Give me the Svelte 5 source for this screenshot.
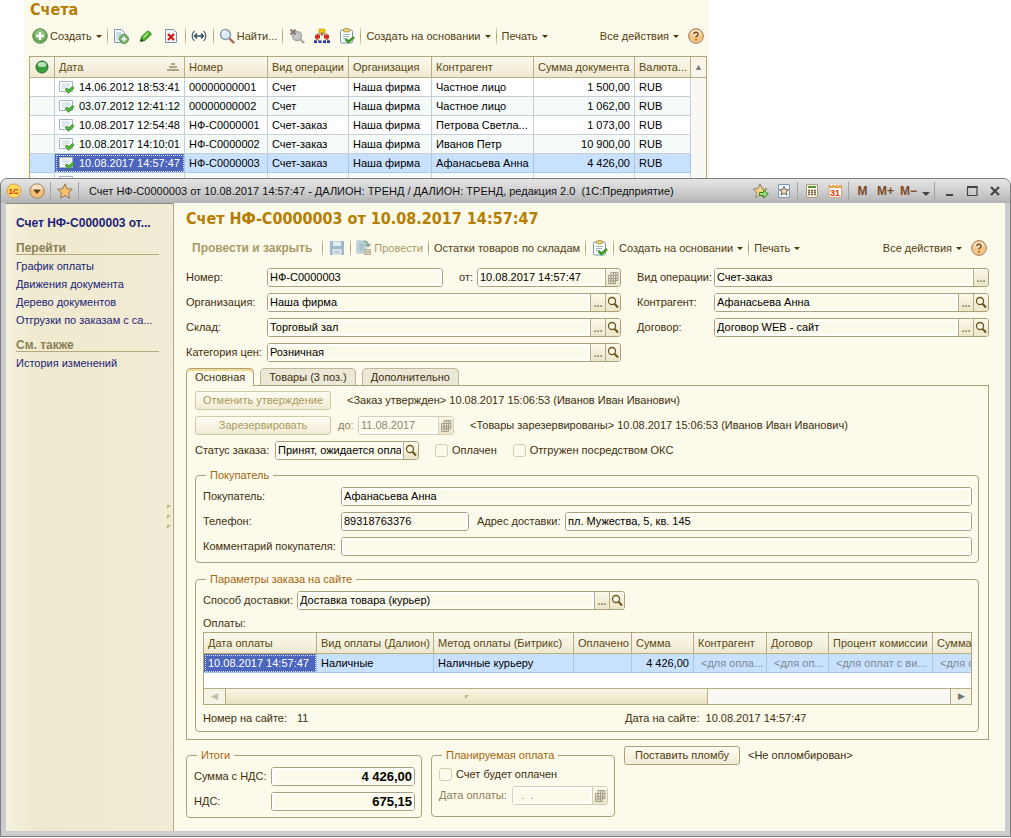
<script lang="ts">
  type Tool = 'find' | 'pick' | 'date';

  const invoices = [
    { date: '14.06.2012 18:53:41', number: '00000000001', kind: 'Счет', org: 'Наша фирма', partner: 'Частное лицо', sum: '1 500,00' },
    { date: '03.07.2012 12:41:12', number: '00000000002', kind: 'Счет', org: 'Наша фирма', partner: 'Частное лицо', sum: '1 062,00' },
    { date: '10.08.2017 12:54:48', number: 'НФ-С0000001', kind: 'Счет-заказ', org: 'Наша фирма', partner: 'Петрова Светла...', sum: '1 073,00' },
    { date: '10.08.2017 14:10:01', number: 'НФ-С0000002', kind: 'Счет-заказ', org: 'Наша фирма', partner: 'Иванов Петр', sum: '10 900,00' },
    { date: '10.08.2017 14:57:47', number: 'НФ-С0000003', kind: 'Счет-заказ', org: 'Наша фирма', partner: 'Афанасьева Анна', sum: '4 426,00' },
  ];

  const links = ['График оплаты', 'Движения документа', 'Дерево документов', 'Отгрузки по заказам с са...'];
  const tabs = ['Основная', 'Товары (3 поз.)', 'Дополнительно'];

  let selected = $state(4);
  let activeTab = $state(0);
</script>

{#snippet icon(name: string)}
  <svg class="icon" width="16" height="16" viewBox="0 0 16 16" fill="none" aria-hidden="true">
    {#if name === 'add'}
      <circle cx="8" cy="8" r="7.3" fill="#6cab5c" stroke="#5f8f55" />
      <circle cx="8" cy="6.5" r="5" fill="#a5d091" opacity=".6" />
      <path d="M8 4v8M4 8h8" stroke="#fff" stroke-width="2.4" />
    {:else if name === 'copy'}
      <path d="M1.5 1.5h7l3 3v10h-10z" fill="#f4f8fb" stroke="#7d97ad" />
      <path d="M3.5 5h5M3.5 7h6M3.5 9h4M3.5 11h3" stroke="#9fb6c8" />
      <circle cx="11" cy="11" r="4.5" fill="#7bb568" stroke="#5b9150" />
      <path d="M11 8.5v5M8.5 11h5" stroke="#fff" stroke-width="1.6" />
    {:else if name === 'edit'}
      <path d="M2.500 13.500l1-4.500 5.500-5.500c1.500-1 4.500 1.500 4 3L7 12.500z" fill="#4fb52c" stroke="#2f7a1c" />
      <path d="M2.500 13.500l.8-3 2.200 2z" fill="#333" />
      <path d="M5.500 9.500l4.500-4.500" stroke="#b4ec8e" stroke-width="1.400" />
    {:else if name === 'delete'}
      <path d="M2.5 1.500h8l3 3v10h-11z" fill="#f1f6fa" stroke="#7590a8" />
      <path d="M5 6l6 6M11 6l-6 6" stroke="#cf1a12" stroke-width="2.200" />
    {:else if name === 'period'}
      <path d="M3.500 3C.5 5 .5 11 3.500 13M12.500 3c3 2 3 8 0 10" stroke="#526a7c" stroke-width="1.300" />
      <path d="M3.500 8h9M6 5.500L3.500 8 6 10.500M10 5.500L12.500 8 10 10.500" stroke="#32495b" stroke-width="1.300" />
    {:else if name === 'search'}
      <path d="M10.500 10.500l4 4" stroke="#b0694e" stroke-width="2.400" stroke-linecap="round" />
      <circle cx="6.500" cy="6.500" r="5" fill="#dcebf7" stroke="#8598ac" stroke-width="1.400" />
      <path d="M3.500 6a3 3 0 0 1 3-3" stroke="#fff" stroke-width="1.400" />
    {:else if name === 'search-off'}
      <path d="M11 11l3.500 3.500" stroke="#b5a8a0" stroke-width="2.400" stroke-linecap="round" />
      <circle cx="8" cy="8" r="4.500" fill="#c6c6c6" stroke="#a5a5a5" stroke-width="1.300" />
      <path d="M1.500 1.500l5 5M6.500 1.500l-5 5" stroke="#8d7474" stroke-width="2" />
    {:else if name === 'tree'}
      <path d="M8 4v4M3 7.500V6h10v1.500M1.500 13l1.500-3 2 3M11 13l2-3 1.500 3" stroke="#9b4a20" />
      <path d="M5 1h6v3.500H5z" fill="#f1c800" stroke="#b89500" stroke-width=".6" />
      <path d="M1 7h5v3.500H1zM10 7h5v3.500h-5z" fill="#de2a18" />
      <path d="M0 12.500h3v2.500H0zM4.500 12.500h3v2.500h-3zM9 12.500h3v2.500H9zM13 12.500h3v2.500h-3z" fill="#2336a8" />
    {:else if name === 'clipboard'}
      <rect x="1.500" y="2" width="12" height="13" rx="1.500" fill="#fff" stroke="#7995a6" />
      <rect x="4.500" y=".8" width="6" height="3" rx="1" fill="#f1da86" stroke="#a98b31" />
      <path d="M4 6.500h7M4 8.500h6M4 10.500h3" stroke="#9ab1c4" />
      <path d="M6.500 11l3 3 5.500-5" stroke="#3c9a29" stroke-width="2.600" />
    {:else if name === 'help'}
      <circle cx="8" cy="8" r="7.400" fill="#f6c583" stroke="#9b8366" />
      <ellipse cx="8" cy="5" rx="5" ry="3.300" fill="#fff" opacity=".5" />
      <path d="M5.800 6.300c0-3 4.600-2.600 4.300 0C10 7.700 8 7.600 8 9.500M8 11v1.500" stroke="#7b4a1e" stroke-width="1.400" />
    {:else if name === 'posted'}
      <path d="M.5 2.500h13v10H.5z" fill="#fbfdff" stroke="#a4b6c6" />
      <path d="M3 5h8M3 7h8M3 9h4" stroke="#c2d0dc" />
      <path d="M7 9.500l2.500 3 5-4.500" stroke="#2f7d22" stroke-width="3" />
      <path d="M7 9.500l2.500 3 5-4.500" stroke="#58c23d" stroke-width="1.600" />
    {:else if name === 'save'}
      <path d="M1 1h14v14H1z" fill="#9fb9cc" />
      <path d="M4 1.500h8v4.500H4zM3.500 9h9v6h-9z" fill="#e3ecef" />
      <path d="M5 11h6M5 13h6" stroke="#a6bccb" />
    {:else if name === 'post'}
      <path d="M1 1h9v12H1z" fill="#c8d8e0" stroke="#a9bdc9" />
      <path d="M3 4h5M3 6h5M3 8h5M3 10h4" stroke="#93aec0" />
      <path d="M8 2c3-1 4 0 4 3M9.500 4l2.500 2.500L14.500 4" stroke="#7faa85" stroke-width="1.500" />
      <path d="M8.500 9.500h6v5h-6z" fill="#d9d7bd" stroke="#b4b193" />
      <path d="M8.500 12h6" stroke="#b4b193" />
    {:else if name === 'star'}
      <path d="M8 .8l2.200 4.900 5.200.6-3.900 3.500 1.100 5.300L8 12.500l-4.600 2.600 1.100-5.300L.6 6.300l5.200-.6z" fill="#f9c069" stroke="#8a795f" />
    {:else if name === 'star-go'}
      <path d="M7 .8l2 4.700 5 .6-3.700 3.300 1 5L7 12l-4.300 2.400 1-5L.3 6.100l4.700-.6z" fill="#f8cf86" stroke="#8f8267" />
      <path d="M6.500 9.500h4V7l4.800 4-4.800 4v-2.500h-4z" fill="#9bdc74" stroke="#39852a" />
    {:else if name === 'doc-star'}
      <path d="M2.500 1.500h11v13h-11z" fill="#eff4f8" stroke="#8098ad" />
      <path d="M8 3.500l1.300 3 3.200.3-2.400 2.100.8 3.200L8 10.400l-2.900 1.700.8-3.200-2.400-2.100 3.200-.3z" fill="#f5d9a0" stroke="#59626c" />
    {:else if name === 'calc'}
      <path d="M2.500 1.500h11v13h-11z" fill="#fdf7e6" stroke="#a79a7d" />
      <path d="M4 3h8v2H4z" fill="#529a3c" />
      <path d="M4 7.500h8M4 9.500h8M4 11.500h8" stroke="#7a5f45" stroke-width="1.300" stroke-dasharray="2 1" />
    {:else if name === 'calendar'}
      <path d="M2 2.500h12.500v12H2z" fill="#fff8ec" stroke="#c5a780" />
      <path d="M2 2h12.500v3H2z" fill="#e9a657" />
      <path d="M4.500 1v2M8 1v2M11.500 1v2" stroke="#fff" />
      <text x="3" y="13" font-size="9" font-weight="bold" fill="#e03a20">31</text>
    {:else if name === 'logo'}
      <circle cx="8" cy="8" r="7" fill="#ffdf52" stroke="#dc9a62" />
      <text x="2.500" y="11" font-size="8" font-weight="bold" fill="#e01c10">1С</text>
    {:else if name === 'menu'}
      <circle cx="8" cy="8" r="7.200" fill="#f5bd72" stroke="#96856d" />
      <ellipse cx="8" cy="5" rx="5.500" ry="3.500" fill="#fff" opacity=".55" />
      <path d="M4 6.500h8L8 11z" fill="#5d4426" />
    {:else if name === 'ball'}
      <circle cx="8" cy="8" r="6" fill="#37a03d" stroke="#2e6b31" />
      <ellipse cx="8" cy="5.500" rx="4.200" ry="2.500" fill="#b7e6b2" />
    {:else if name === 'find'}
      <circle cx="7" cy="6" r="3.500" fill="#fffdf0" stroke="#6b5416" stroke-width="1.300" />
      <path d="M9.500 8.800l3.500 3.700" stroke="#6b5416" stroke-width="2" />
    {:else if name === 'date'}
      <path d="M6 2.500h7v8H6z" fill="#e9e7d6" stroke="#a6a18c" />
      <path d="M3.500 5.500h7v8h-7zM3.500 8.500h9.500M3.500 11h7M6 5.500v8M8.500 3v10M6 5.500h7M10.800 2.500v8" stroke="#a6a18c" />
    {/if}
  </svg>
{/snippet}

{#snippet caret()}<span class="caret"></span>{/snippet}
{#snippet help()}<button class="help" aria-label="Справка">{@render icon('help')}</button>{/snippet}

{#snippet field(id: string, value: string, tools: Tool[] = [], disabled = false)}
  <div class="field" class:disabled>
    <input {id} {value} {disabled} type="text" />
    {#each tools as tool}
      {#if tool === 'pick'}
        <button class="tool pick" aria-label="Выбрать">...</button>
      {:else}
        <button class="tool" {disabled} aria-label={tool === 'find' ? 'Открыть' : 'Календарь'}>{@render icon(tool)}</button>
      {/if}
    {/each}
  </div>
{/snippet}

<div class="desktop">
  <section class="list">
    <h1>Счета</h1>
    <div class="toolbar">
      <button>{@render icon('add')}Создать{@render caret()}</button>
      <i></i>
      <button class="square" aria-label="Скопировать">{@render icon('copy')}</button>
      <button class="square" aria-label="Изменить">{@render icon('edit')}</button>
      <button class="square" aria-label="Удалить">{@render icon('delete')}</button>
      <i></i>
      <button class="square" aria-label="Период">{@render icon('period')}</button>
      <i></i>
      <button>{@render icon('search')}Найти...</button>
      <i></i>
      <button class="square" aria-label="Отменить поиск">{@render icon('search-off')}</button>
      <button class="square" aria-label="Структура">{@render icon('tree')}</button>
      <button class="square" aria-label="Отчет">{@render icon('clipboard')}</button>
      <i></i>
      <button>Создать на основании{@render caret()}</button>
      <i></i>
      <button>Печать{@render caret()}</button>
      <button class="right">Все действия{@render caret()}</button>
      {@render help()}
    </div>
    <div class="grid-box list-grid">
      <table>
        <colgroup>
          <col style:width="25px" /><col style:width="130px" /><col style:width="83px" /><col style:width="81px" />
          <col style:width="83px" /><col /><col style:width="101px" /><col style:width="56px" />
        </colgroup>
        <thead>
          <tr>
            <th class="mark">{@render icon('ball')}</th>
            <th>
              <div class="sorted">
                Дата
                <svg width="12" height="8" viewBox="0 0 12 8" aria-hidden="true"><path d="M4 1h4M2 4h8M0 7h12" stroke="#aca486" stroke-width="2" /></svg>
              </div>
            </th>
            <th>Номер</th><th>Вид операции</th><th>Организация</th><th>Контрагент</th><th>Сумма документа</th><th>Валюта...</th>
          </tr>
        </thead>
        <tbody>
          {#each invoices as row, i}
            <tr class:selected={selected === i} onclick={() => (selected = i)}>
              <td></td>
              <td class="date"><div class="stamp">{@render icon('posted')}{row.date}</div></td>
              <td>{row.number}</td><td>{row.kind}</td><td>{row.org}</td><td>{row.partner}</td>
              <td class="num">{row.sum}</td><td>RUB</td>
            </tr>
          {/each}
          <tr><td></td><td class="date"><div class="stamp">{@render icon('posted')}</div></td><td></td><td></td><td></td><td></td><td></td><td></td></tr>
        </tbody>
      </table>
      <div class="vscroll"><button aria-label="Вверх">▲</button></div>
    </div>
  </section>

  <main class="window">
    <header class="titlebar">
      <button aria-label="1С">{@render icon('logo')}</button>
      <button aria-label="Меню">{@render icon('menu')}</button>
      <i></i>
      <button aria-label="Избранное">{@render icon('star')}</button>
      <i></i>
      <span class="caption">Счет НФ-С0000003 от 10.08.2017 14:57:47 - ДАЛИОН: ТРЕНД / ДАЛИОН: ТРЕНД, редакция 2.0&nbsp; (1С:Предприятие)</span>
      <button aria-label="Добавить в избранное">{@render icon('star-go')}</button>
      <button aria-label="Список избранного">{@render icon('doc-star')}</button>
      <i></i>
      <button aria-label="Калькулятор">{@render icon('calc')}</button>
      <button aria-label="Календарь">{@render icon('calendar')}</button>
      <i></i>
      <button class="memory">M</button>
      <button class="memory">M+</button>
      <button class="memory">M−</button>
      <button class="more" aria-label="Еще"><span class="caret"></span></button>
      <i></i>
      <button aria-label="Свернуть"><svg width="14" height="14" viewBox="0 0 14 14"><path d="M4 11h7" stroke="#444" stroke-width="2" /></svg></button>
      <button aria-label="Развернуть"><svg width="14" height="14" viewBox="0 0 14 14"><path d="M2.500 3h9.500v8.500h-9.500z" fill="none" stroke="#444" stroke-width="1.200" /><path d="M2 3h10.500" stroke="#444" stroke-width="2" /></svg></button>
      <button aria-label="Закрыть"><svg width="14" height="14" viewBox="0 0 14 14"><path d="M3 3l8 8M11 3l-8 8" stroke="#444" stroke-width="2.200" /></svg></button>
    </header>

    <div class="body">
      <nav>
        <a class="current" href="#doc">Счет НФ-С0000003 от...</a>
        <h3>Перейти</h3>
        {#each links as link}
          <a href="#go">{link}</a>
        {/each}
        <h3>См. также</h3>
        <a href="#history">История изменений</a>
        <div class="grip"><b></b><b></b><b></b></div>
      </nav>

      <div class="form">
        <h2>Счет НФ-С0000003 от 10.08.2017 14:57:47</h2>
        <div class="toolbar">
          <button class="primary" disabled>Провести и закрыть</button>
          <i></i>
          <button class="square" disabled aria-label="Записать">{@render icon('save')}</button>
          <i></i>
          <button disabled>{@render icon('post')}Провести</button>
          <i></i>
          <button>Остатки товаров по складам</button>
          <i></i>
          <button class="square" aria-label="Отчет">{@render icon('clipboard')}</button>
          <i></i>
          <button>Создать на основании{@render caret()}</button>
          <i></i>
          <button>Печать{@render caret()}</button>
          <button class="right">Все действия{@render caret()}</button>
          {@render help()}
        </div>

        <div class="head">
          <div class="rows">
            <div class="row">
              <label class="key" for="number">Номер:</label>
              {@render field('number', 'НФ-С0000003')}
              <label class="from" for="moment">от:</label>
              <div class="w144">{@render field('moment', '10.08.2017 14:57:47', ['date'])}</div>
            </div>
            <div class="row"><label class="key" for="org">Организация:</label>{@render field('org', 'Наша фирма', ['pick', 'find'])}</div>
            <div class="row"><label class="key" for="store">Склад:</label>{@render field('store', 'Торговый зал', ['pick', 'find'])}</div>
            <div class="row"><label class="key" for="price">Категория цен:</label>{@render field('price', 'Розничная', ['pick', 'find'])}</div>
          </div>
          <div class="rows side">
            <div class="row"><label class="key" for="kind">Вид операции:</label>{@render field('kind', 'Счет-заказ', ['pick'])}</div>
            <div class="row"><label class="key" for="partner">Контрагент:</label>{@render field('partner', 'Афанасьева Анна', ['pick', 'find'])}</div>
            <div class="row"><label class="key" for="contract">Договор:</label>{@render field('contract', 'Договор WEB - сайт', ['pick', 'find'])}</div>
          </div>
        </div>

        <div class="tabs" role="tablist">
          {#each tabs as tab, i}
            <button role="tab" aria-selected={activeTab === i} class:active={activeTab === i} onclick={() => (activeTab = i)}>{tab}</button>
          {/each}
        </div>

        <div class="panel">
          <div class="rows">
            <div class="row">
              <button class="btn w136" disabled>Отменить утверждение</button>
              <span class="note">&lt;Заказ утвержден&gt; 10.08.2017 15:06:53 (Иванов Иван Иванович)</span>
            </div>
            <div class="row">
              <button class="btn w136" disabled>Зарезервировать</button>
              <label class="until" for="until">до:</label>
              <div class="w96">{@render field('until', '11.08.2017', ['date'], true)}</div>
              <span class="note">&lt;Товары зарезервированы&gt; 10.08.2017 15:06:53 (Иванов Иван Иванович)</span>
            </div>
            <div class="row">
              <label class="status" for="status">Статус заказа:</label>
              <div class="w144">{@render field('status', 'Принят, ожидается оплата', ['find'])}</div>
              <label class="check"><input type="checkbox" disabled />Оплачен</label>
              <label class="check"><input type="checkbox" disabled />Отгружен посредством ОКС</label>
            </div>
          </div>

          <fieldset class="buyer">
            <legend>Покупатель</legend>
            <div class="rows">
              <div class="row"><label class="key" for="buyer">Покупатель:</label>{@render field('buyer', 'Афанасьева Анна')}</div>
              <div class="row">
                <label class="key" for="phone">Телефон:</label>
                <div class="w128">{@render field('phone', '89318763376')}</div>
                <label class="address" for="address">Адрес доставки:</label>
                {@render field('address', 'пл. Мужества, 5, кв. 145')}
              </div>
              <div class="row"><label class="key" for="comment">Комментарий покупателя:</label>{@render field('comment', '')}</div>
            </div>
          </fieldset>

          <fieldset class="site">
            <legend>Параметры заказа на сайте</legend>
            <div class="row">
              <label class="delivery" for="delivery">Способ доставки:</label>
              <div class="w328">{@render field('delivery', 'Доставка товара (курьер)', ['pick', 'find'])}</div>
            </div>
            <div class="subtitle">Оплаты:</div>
            <div class="grid-box payments">
              <table>
                <colgroup>
                  <col style:width="113px" /><col style:width="117px" /><col style:width="140px" /><col style:width="58px" /><col style:width="62px" />
                  <col style:width="73px" /><col style:width="62px" /><col style:width="104px" /><col />
                </colgroup>
                <thead>
                  <tr>
                    <th>Дата оплаты</th><th>Вид оплаты (Далион)</th><th>Метод оплаты (Битрикс)</th><th>Оплачено</th><th>Сумма</th>
                    <th>Контрагент</th><th>Договор</th><th>Процент комиссии</th><th>Сумма</th>
                  </tr>
                </thead>
                <tbody>
                  <tr class="selected">
                    <td class="date">10.08.2017 14:57:47</td><td>Наличные</td><td>Наличные курьеру</td><td></td><td class="num">4 426,00</td>
                    <td class="hint">&lt;для опла...</td><td class="hint">&lt;для оп...</td><td class="hint">&lt;для оплат с ви...</td><td class="hint">&lt;для о</td>
                  </tr>
                </tbody>
              </table>
              <div class="hscroll">
                <button disabled aria-label="Влево">◀</button>
                <div class="thumb"><b></b></div>
                <button aria-label="Вправо">▶</button>
              </div>
            </div>
            <div class="site-info">
              <div><span>Номер на сайте:</span>11</div>
              <div><span>Дата на сайте:</span>10.08.2017 14:57:47</div>
            </div>
          </fieldset>
        </div>

        <div class="bottom">
          <fieldset class="totals">
            <legend>Итоги</legend>
            <div class="rows">
              <div class="row"><label class="key" for="total">Сумма с НДС:</label>{@render field('total', '4 426,00')}</div>
              <div class="row"><label class="key" for="vat">НДС:</label>{@render field('vat', '675,15')}</div>
            </div>
          </fieldset>
          <fieldset class="planned">
            <legend>Планируемая оплата</legend>
            <label class="check"><input type="checkbox" disabled />Счет будет оплачен</label>
            <div class="row">
              <label class="key" for="paydate">Дата оплаты:</label>
              {@render field('paydate', '  .  .', ['date'], true)}
            </div>
          </fieldset>
          <button class="btn seal">Поставить пломбу</button>
          <span class="seal-state">&lt;Не опломбирован&gt;</span>
        </div>
      </div>
    </div>
  </main>
</div>

<style>
  :global(body) { margin: 0; background: #fff; }

  .desktop {
    display: grid;
    grid-template-columns: minmax(0, 1fr);
    box-sizing: border-box;
    min-height: 100vh;
    padding-bottom: 1px;
    font-family: "Liberation Sans", Arial, sans-serif;
    font-size: 11px;
    line-height: 15px;
    color: #3f2f0b;
  }
  .desktop > * { grid-area: 1 / 1; }
  .desktop * { box-sizing: border-box; }

  button {
    display: flex;
    align-items: center;
    justify-content: center;
    margin: 0;
    padding: 0;
    border: 0;
    background: none;
    font: inherit;
    color: inherit;
    white-space: nowrap;
  }
  .icon { flex: none; display: block; }
  .caret {
    flex: none;
    border: 3px solid transparent;
    border-top: 3px solid #4a3708;
    border-bottom: 0;
    margin-left: 4px;
  }

  h1, h2 {
    margin: 0;
    font-family: "DejaVu Sans Condensed", "Noto Sans", sans-serif;
    font-size: 16px;
    line-height: 24px;
    font-weight: bold;
    color: #b57e00;
  }

  .toolbar {
    display: flex;
    align-items: center;
    height: 24px;
    color: #53400f;
  }
  .toolbar button { height: 20px; padding: 0 4px; }
  .toolbar button:disabled { color: #ab9a66; }
  .toolbar .icon { margin-right: 2px; }
  .toolbar .square { width: 25px; padding: 0; }
  .toolbar .square .icon, .toolbar .help .icon { margin: 0; }
  .toolbar .right { margin-left: auto; padding-right: 6px; }
  .toolbar .help { padding: 0 3px; }
  .toolbar .primary { font-size: 12px; font-weight: bold; padding: 0 9px 0 6px; }
  .toolbar i {
    flex: none;
    width: 1px;
    height: 18px;
    margin: 0 1px;
    background: linear-gradient(#e5dfc4, #a89d72, #e5dfc4);
  }

  /* invoice list behind the window */
  .list {
    align-self: start;
    max-width: 685px;
    height: 190px;
    overflow: hidden;
    margin-left: 24px;
    padding: 0 2px 0 5px;
    background: #fcfaeb;
  }
  .list h1 { height: 24px; line-height: 20px; padding-left: 1px; }
  .list .toolbar { margin-bottom: 8px; }
  .list .toolbar button:first-child { padding-left: 3px; }

  .grid-box { border: 1px solid #b1a779; background: #fff; }
  .list-grid { display: flex; }

  table {
    width: 100%;
    table-layout: fixed;
    border-collapse: separate;
    border-spacing: 0;
    color: #000;
  }
  th, td {
    overflow: hidden;
    padding: 0 4px;
    white-space: nowrap;
    text-align: left;
    font-weight: normal;
  }
  th {
    height: 21px;
    border-right: 1px solid #b8ae83;
    border-bottom: 1px solid #b8ae83;
    background: linear-gradient(#f8f7ef, #f4f1de 55%, #eee8cd);
    color: #5c4710;
  }
  td {
    height: 19px;
    line-height: 18px;
    border-right: 1px solid #c6ced6;
    border-bottom: 1px solid #c6ced6;
  }
  .mark { padding: 0 4px; }
  .sorted { display: flex; align-items: center; justify-content: space-between; padding-right: 1px; }
  .list tbody tr:nth-child(even) { background: #f4fbf8; }
  tr.selected td { background: #c8e1ff; border-color: #a9c5e8; }
  tr.selected .date { background: #4d66bd; color: #fff; outline: 1px dotted #dfe8ff; outline-offset: -2px; }
  .stamp { display: flex; align-items: center; gap: 4px; }
  .num { text-align: right; }
  .hint { padding-left: 7px; color: #7e8794; }

  .vscroll { flex: none; width: 15px; background: #faf8f2; }
  .vscroll button {
    width: 100%;
    height: 21px;
    border-bottom: 1px solid #b8ae83;
    background: #f7f5ea;
    font-size: 9px;
    color: #807d76;
  }

  /* document window */
  .window {
    display: flex;
    flex-direction: column;
    margin-top: 178px;
    border: 1px solid #7c7c7c;
    border-radius: 7px 7px 0 0;
    background: #cbcccf;
    z-index: 1;
  }
  .titlebar {
    display: flex;
    align-items: center;
    flex: none;
    height: 24px;
    padding: 0 4px 0 1px;
    border-radius: 6px 6px 0 0;
    background: linear-gradient(#e6e6e6, #cfcfd0 50%, #b3b3b5);
    color: #1d1d1d;
  }
  .titlebar button { flex: none; width: 23px; height: 22px; }
  .titlebar i { flex: none; width: 1px; height: 18px; margin: 0 2px; background: #a3a3a5; }
  .caption {
    flex: 1;
    min-width: 0;
    padding-left: 8px;
    overflow: hidden;
    white-space: nowrap;
    color: #111;
  }
  .titlebar .memory { font-size: 12px; font-weight: bold; color: #7a4a27; }
  .titlebar .more { width: 12px; align-items: flex-end; padding-bottom: 6px; }
  .more .caret { border-width: 4px 4px 0; border-top-color: #444; margin: 0; }

  .body {
    flex: 1;
    display: flex;
    margin: 0 5px 5px;
    background: #fcfaeb;
  }

  nav {
    flex: none;
    position: relative;
    display: flex;
    flex-direction: column;
    width: 168px;
    padding: 10px 14px 0 10px;
    border-top: 1px solid #8f8d80;
    border-right: 1px solid #b5a982;
    background: linear-gradient(90deg, #f5f3de, #efe9cf 28px, #f2ecd6);
  }
  nav a { line-height: 18px; color: #1b2478; text-decoration: none; white-space: nowrap; }
  nav .current { font-size: 12px; font-weight: bold; }
  nav h3 {
    margin: 10px 0 2px;
    border-bottom: 1px solid #b5a97b;
    font-size: 12px;
    line-height: 12px;
    color: #8a7f55;
  }
  /* splitter handle lies over the edge of the navigation pane */
  .grip { position: absolute; right: 2px; top: 48%; display: grid; gap: 6px; }
  .grip b, .thumb b { display: block; width: 4px; height: 4px; border: 2px solid #bfb58c; border-right-color: transparent; border-bottom-color: transparent; }

  .form { flex: 1; min-width: 0; padding: 4px 16px 12px 12px; }
  .form h2 { white-space: nowrap; }
  .form > .toolbar { margin: 5px 0 8px; }
  .form > .toolbar .help { padding-right: 2px; }

  .rows { display: grid; gap: 6px; }
  .row { display: flex; align-items: center; height: 19px; }
  .row label, .row .note { flex: none; white-space: nowrap; }

  .head { display: grid; grid-template-columns: 435fr 352fr; gap: 16px; }
  .head .key { width: 81px; }
  .head .side { align-content: start; }
  .head .side .key { width: 77px; }
  .from { width: 34px; padding-left: 16px; }
  .w96 { flex: none; width: 96px; }
  .w128 { flex: none; width: 128px; }
  .w136 { flex: none; width: 136px; }
  .w144 { flex: none; width: 144px; }
  .w328 { flex: none; width: 328px; }

  .field {
    display: flex;
    flex: 1;
    min-width: 0;
    height: 19px;
    border: 1px solid #aba27a;
    border-radius: 3px;
    background: #fff;
    overflow: hidden;
  }
  .field input {
    flex: 1;
    min-width: 0;
    width: 0;
    margin: 0;
    padding: 0;
    border: 2px solid #fff;
    background: #fcfaeb;
    font: inherit;
    color: #000;
    outline: 0;
  }
  .tool {
    flex: none;
    width: 15px;
    border-left: 1px solid #b7ae88;
    background: linear-gradient(#faf8ea, #ece6c9);
  }
  .pick { align-items: flex-end; font-weight: bold; color: #8d825a; }
  .disabled { border-color: #d3cdb2; }
  .disabled input { color: #8d8872; }
  .disabled .tool { border-color: #d3cdb2; }

  .tabs { display: flex; gap: 6px; margin-top: 6px; }
  .tabs button {
    height: 17px;
    padding: 0 8px;
    border: 1px solid #bdb593;
    border-bottom: 0;
    border-radius: 5px 5px 0 0;
    background: #ebe8d8;
    color: #3f2f0b;
  }
  .tabs .active {
    height: 18px;
    margin-bottom: -1px;
    border-color: #aba27a;
    background: #fcfaeb;
    box-shadow: inset 0 2px #f7d98f;
    z-index: 1;
  }

  .panel { padding: 5px 9px 7px 8px; border: 1px solid #aba27a; }
  .btn {
    height: 19px;
    border: 1px solid #aba27a;
    border-radius: 3px;
    background: linear-gradient(#fdfcf4, #f1ecd4);
    color: #53400f;
  }
  .btn:disabled { border-color: #d0c9a6; color: #ab9a5c; }
  .note { margin-left: 16px; }
  .until { width: 27px; padding-left: 7px; color: #8d8055; }
  .status { width: 80px; }
  .check { display: flex; align-items: center; margin-left: 16px; }
  .check input {
    appearance: none;
    width: 13px;
    height: 13px;
    margin: 0 4px 0 0;
    border: 1px solid #d3cdb2;
    border-radius: 3px;
    background: #fcfaeb;
  }

  fieldset {
    min-width: 0;
    margin: 0;
    border: 1px solid #aba27a;
    border-radius: 4px;
  }
  legend { padding: 0 4px; margin-left: 3px; line-height: 15px; color: #a3670a; }
  .buyer { margin-top: 8px; padding: 4px 6px 6px 7px; }
  .buyer .key { width: 138px; }
  .address { width: 96px; padding-left: 8px; }
  .site { margin-top: 9px; padding: 4px 6px 5px 7px; }
  .delivery { width: 94px; }
  .subtitle { margin: 6px 0 1px; }

  .payments table { margin-bottom: 15px; }
  .payments th:last-child, .payments td:last-child { border-right: 0; }
  .hscroll {
    display: flex;
    height: 16px;
    border-top: 1px solid #b8ae83;
    background: #faf8f2;
  }
  .hscroll button { flex: none; width: 21px; font-size: 9px; color: #77746c; background: #f5f3e6; border-left: 1px solid #b8ae83; }
  .hscroll button:first-child { border-left: 0; }
  .hscroll button:disabled { color: #c2bda8; }
  .thumb {
    display: flex;
    align-items: center;
    justify-content: center;
    width: 63%;
    margin-right: auto;
    border: solid #b8ae83;
    border-width: 0 1px;
    background: linear-gradient(#f9f6e5, #e9e2c2);
  }

  .site-info { display: flex; margin-top: 6px; }
  .site-info div { flex: 1; }
  .site-info div:first-child { flex: none; width: 422px; }
  .site-info span { display: inline-block; margin-right: 6px; }
  .site-info div:first-child span { width: 88px; }

  .bottom { display: flex; align-items: flex-start; margin-top: 8px; }
  .totals { width: 236px; padding: 4px 6px 6px 7px; }
  .totals .key { width: 77px; }
  .totals input { text-align: right; font-size: 13px; font-weight: bold; }
  .planned { width: 184px; margin-left: 9px; padding: 4px 6px 11px 7px; }
  .planned .check { margin: 0 0 4px; }
  .planned .key { width: 73px; color: #8d8055; }
  .seal { flex: none; width: 116px; margin: -2px 0 0 9px; }
  .seal-state { margin-left: 8px; }
</style>
